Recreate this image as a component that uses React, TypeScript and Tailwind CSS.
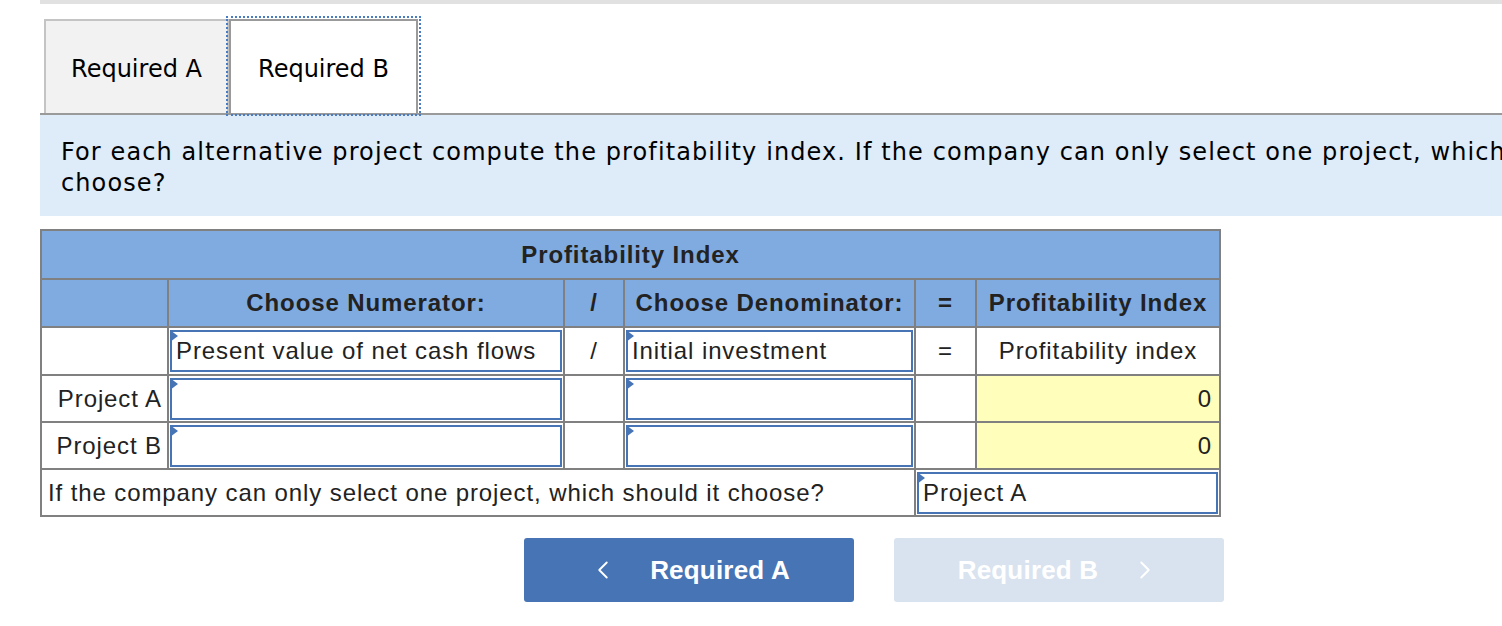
import React from 'react'
import { ChevronLeft, ChevronRight } from 'lucide-react'

const arial = { fontFamily: '"Liberation Sans", Arial, sans-serif' }
const verdana = { fontFamily: '"DejaVu Sans", Verdana, sans-serif' }

function Marker() {
  return (
    <span className="absolute -left-[2px] -top-[2px] h-0 w-0 border-y-[6px] border-l-[8px] border-y-transparent border-l-[#4674b5]" />
  )
}

function DropBox({ value = '' }: { value?: string }) {
  return (
    <div className="relative flex h-[42px] items-center border-2 border-[#4674b5] bg-white pl-[4px] text-left">
      <Marker />
      {value}
    </div>
  )
}

const cell = 'border-2 border-[#808080]'

export default function App() {
  const rows = ['Project A', 'Project B']

  return (
    <div className="h-[626px] w-[1502px] overflow-hidden bg-white">
      <div className="ml-[40px] w-[1760px]">
        <div className="h-[4px] bg-[#e1e1e1]" />

        {/* tabs */}
        <div className="mt-[15px] flex items-end pl-[4px] text-[24px] text-black" style={verdana}>
          <div className="flex h-[94px] w-[185px] items-center justify-center border-2 border-b-0 border-[#c4c4c4] bg-[#f2f2f2] pt-[3px]">
            Required A
          </div>
          <div className="flex h-[94px] w-[189px] items-center justify-center border-2 border-b-0 border-[#9a9a9a] bg-white pt-[3px] outline-2 outline-offset-[1px] outline-[#4a7cc4] outline-dotted">
            Required B
          </div>
        </div>
        <div className="h-[2px] bg-[#9a9a9a]" />

        {/* instructions */}
        <div
          className="w-[1680px] bg-[#deebf8] pb-[17px] pl-[21px] pt-[22px] text-[24px] leading-[31px] tracking-[1.1px] text-black"
          style={verdana}
        >
          For each alternative project compute the profitability index. If the company can only select one project, which should it choose?
        </div>

        {/* table */}
        <div className="mt-[13px]" style={arial}>
          <table className="table-fixed border-collapse text-[24px] tracking-[0.9px] text-[#222]">
            <colgroup>
              <col className="w-[127px]" />
              <col className="w-[396px]" />
              <col className="w-[60px]" />
              <col className="w-[291px]" />
              <col className="w-[61px]" />
              <col className="w-[244px]" />
            </colgroup>
            <tbody>
              <tr className="h-[49px] bg-[#80abe0] font-bold">
                <td colSpan={6} className={`${cell} text-center`}>
                  Profitability Index
                </td>
              </tr>
              <tr className="h-[48px] bg-[#80abe0] text-center font-bold">
                <td className={cell} />
                <td className={cell}>Choose Numerator:</td>
                <td className={cell}>/</td>
                <td className={cell}>Choose Denominator:</td>
                <td className={cell}>=</td>
                <td className={cell}>Profitability Index</td>
              </tr>
              <tr className="h-[48px] text-center">
                <td className={cell} />
                <td className={`${cell} p-[1px]`}>
                  <DropBox value="Present value of net cash flows" />
                </td>
                <td className={cell}>/</td>
                <td className={`${cell} p-[1px]`}>
                  <DropBox value="Initial investment" />
                </td>
                <td className={cell}>=</td>
                <td className={cell}>Profitability index</td>
              </tr>
              {rows.map(r => (
                <tr key={r} className="h-[47px]">
                  <td className={`${cell} pr-[5px] text-right`}>{r}</td>
                  <td className={`${cell} p-[1px]`}>
                    <DropBox />
                  </td>
                  <td className={cell} />
                  <td className={`${cell} p-[1px]`}>
                    <DropBox />
                  </td>
                  <td className={cell} />
                  <td className={`${cell} bg-[#ffffbb] pr-[7px] text-right`}>0</td>
                </tr>
              ))}
              <tr className="h-[47px]">
                <td colSpan={4} className={`${cell} pl-[6px]`}>
                  If the company can only select one project, which should it choose?
                </td>
                <td colSpan={2} className={`${cell} p-[1px]`}>
                  <DropBox value="Project A" />
                </td>
              </tr>
            </tbody>
          </table>
        </div>

        {/* nav buttons */}
        <div className="ml-[484px] mt-[21px] flex gap-[40px]" style={arial}>
          <button className="flex h-[64px] w-[330px] items-center justify-center gap-[32px] rounded-[3px] bg-[#4674b4] text-[26px] font-bold text-white">
            <ChevronLeft className="h-[30px] w-[30px]" strokeWidth={1.5} />
            <span className="tracking-[0.2px]">Required A</span>
          </button>
          <button className="flex h-[64px] w-[330px] items-center justify-center gap-[32px] rounded-[3px] bg-[#d9e3ef] text-[26px] font-bold text-white">
            <span className="tracking-[0.2px]">Required B</span>
            <ChevronRight className="h-[30px] w-[30px]" strokeWidth={1.5} />
          </button>
        </div>
      </div>
    </div>
  )
}
